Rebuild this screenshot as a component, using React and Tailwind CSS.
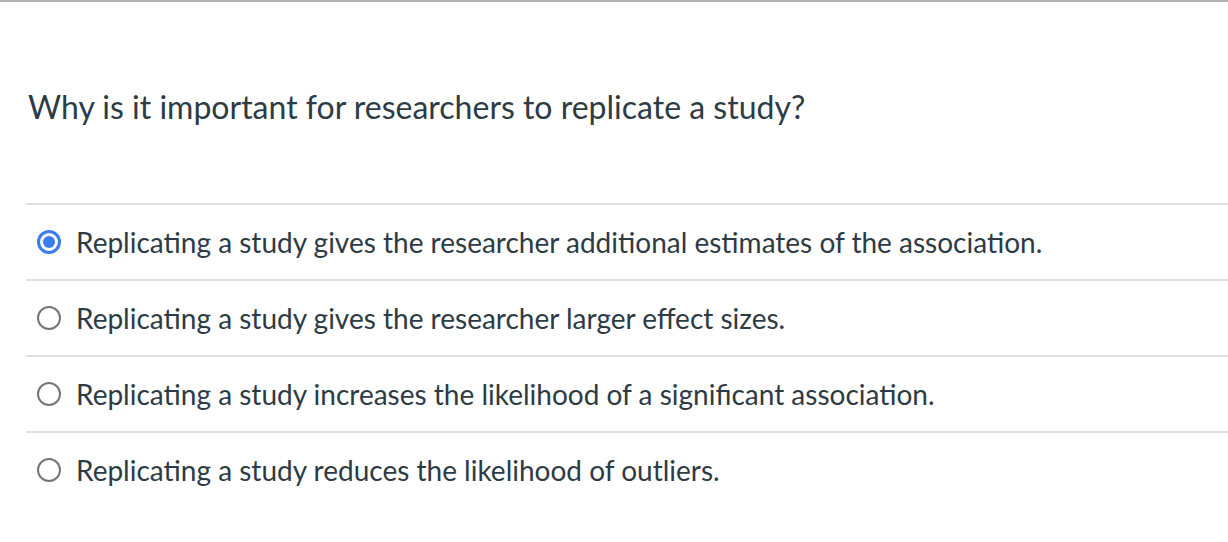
import React, { useState } from "react";

const answers = [
  "Replicating a study gives the researcher additional estimates of the association.",
  "Replicating a study gives the researcher larger effect sizes.",
  "Replicating a study increases the likelihood of a significant association.",
  "Replicating a study reduces the likelihood of outliers.",
];

const Radio = ({ checked }) =>
  checked ? (
    <span className="flex h-6 w-6 shrink-0 items-center justify-center rounded-full border-[3px] border-[#3b7cf0] bg-white">
      <span className="h-3 w-3 rounded-full bg-[#3b7cf0]" />
    </span>
  ) : (
    <span className="h-6 w-6 shrink-0 rounded-full border-2 border-[#767676] bg-white" />
  );

export default function App() {
  const [selected, setSelected] = useState(0);

  return (
    <div
      className="min-h-[542px] w-full border-t-2 border-[#b3b3b3] bg-white text-[#2d3b45]"
      style={{ fontFamily: "Lato, 'Noto Sans', sans-serif" }}
    >
      <div className="pl-[28px] pt-[84px] pb-[75px]">
        <h2 className="text-[32px] leading-[42px]">
          Why is it important for researchers to replicate a study?
        </h2>
      </div>

      <div className="ml-[26px]">
        {answers.map((a, i) => (
          <label
            key={i}
            onClick={() => setSelected(i)}
            className="flex h-[76px] cursor-pointer items-center gap-[15px] border-t-2 border-[#e0e0e0] pl-[11px]"
          >
            <Radio checked={selected === i} />
            <span className="text-[28px]">{a}</span>
          </label>
        ))}
      </div>
    </div>
  );
}
